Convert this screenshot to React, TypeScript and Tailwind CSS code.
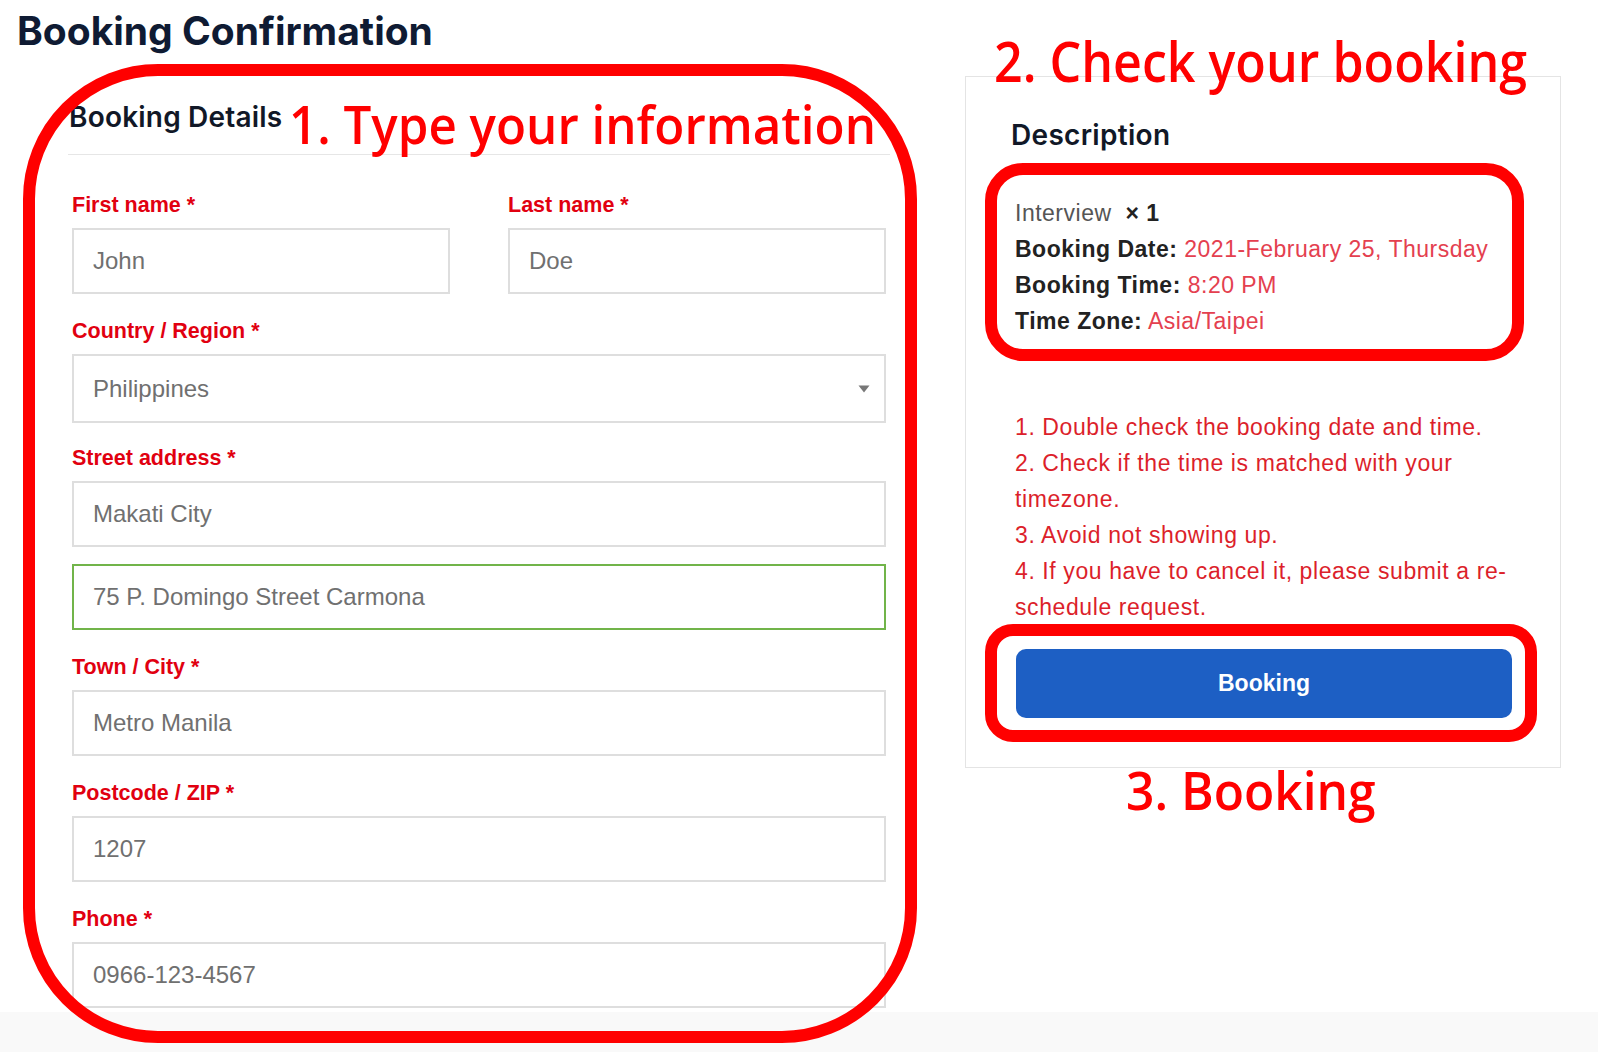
import React from 'react';

const sans = { fontFamily: '"Liberation Sans", Arial, sans-serif' };
const heading = { fontFamily: 'Inter, "Noto Sans", sans-serif' };
const note = { fontFamily: '"Open Sans", "Noto Sans", sans-serif' };

interface FieldProps {
  label: string;
  value: string;
  focused?: boolean;
}

const Label: React.FC<{ text: string }> = ({ text }) => (
  <label className="block text-[21.5px] leading-[24px] font-bold text-[#e10010]" style={sans}>
    {text} *
  </label>
);

const TextInput: React.FC<{ value: string; focused?: boolean }> = ({ value, focused }) => (
  <input
    readOnly
    defaultValue={value}
    className={`block w-full h-[66px] border-2 bg-white pl-[19px] text-[24px] text-[#707070] outline-none ${
      focused ? 'border-[#71b44a]' : 'border-[#dedede]'
    }`}
    style={sans}
  />
);

const Field: React.FC<FieldProps> = ({ label, value, focused }) => (
  <div>
    <Label text={label} />
    <div className="mt-[11px]">
      <TextInput value={value} focused={focused} />
    </div>
  </div>
);

const InfoRow: React.FC<{ name: string; value: string }> = ({ name, value }) => (
  <div>
    <span className="font-bold text-[#222]">{name}</span>{' '}
    <span className="text-[#e4404f]">{value}</span>
  </div>
);

export default function App() {
  return (
    <div className="relative w-[1598px] h-[1052px] overflow-hidden bg-[linear-gradient(to_bottom,#ffffff_1012px,#f9f9f9_1012px)]">
      <h1 className="h-[54px] pl-[17px] pt-2 text-[39px] leading-[1.2] font-bold text-[#0f1b33]" style={heading}>
        Booking Confirmation
      </h1>

      <div className="flex items-start pl-[68px]">
        {/* form */}
        <section className="w-[822px] pt-[47px]">
          <div className="border-b border-[#e6e6e6] pb-[21px]">
            <h2 className="pl-px text-[28px] leading-[32px] font-semibold tracking-[0.2px] text-[#111827]" style={heading}>
              Booking Details
            </h2>
          </div>

          <div className="flex flex-col px-[4px] pt-[38px]">
            <div className="grid grid-cols-2 gap-x-[58px]">
              <Field label="First name" value="John" />
              <Field label="Last name" value="Doe" />
            </div>

            <div className="mt-[25px]">
              <Label text="Country / Region" />
              <div className="relative mt-[11px]">
                <select
                  defaultValue="PH"
                  className="block w-full h-[69px] appearance-none border-2 border-[#dedede] bg-white pl-[19px] text-[24px] text-[#707070] outline-none"
                  style={sans}
                >
                  <option value="PH">Philippines</option>
                </select>
                <svg className="pointer-events-none absolute right-[16px] top-[31px]" width="12" height="8" viewBox="0 0 12 8">
                  <path d="M0.5 0.5h11L6 7.5z" fill="#777" />
                </svg>
              </div>
            </div>

            <div className="mt-[23px]">
              <Label text="Street address" />
              <div className="mt-[11px] flex flex-col gap-[17px]">
                <TextInput value="Makati City" />
                <TextInput value="75 P. Domingo Street Carmona" focused />
              </div>
            </div>

            <div className="mt-[25px]">
              <Field label="Town / City" value="Metro Manila" />
            </div>
            <div className="mt-[25px]">
              <Field label="Postcode / ZIP" value="1207" />
            </div>
            <div className="mt-[25px]">
              <Field label="Phone" value="0966-123-4567" />
            </div>
          </div>
        </section>

        {/* summary */}
        <aside className="ml-[75px] mt-[22px] w-[596px] border border-[#e4e4e4] bg-white pt-[42px] pb-[25px]">
          <h3 className="pl-[45px] text-[28px] leading-[32px] font-semibold tracking-[0.3px] text-[#111827]" style={heading}>
            Description
          </h3>

          <div
            className="mt-[12px] ml-[19px] w-[539px] rounded-[38px] border-[12px] border-[#ff0000] pl-[18px] pt-[20px] pb-[10px] text-[23px] leading-[36px] tracking-[0.5px]"
            style={sans}
          >
            <div>
              <span className="text-[#555]">Interview</span>
              <span className="ml-[14px] font-bold text-[#222]">× 1</span>
            </div>
            <InfoRow name="Booking Date:" value="2021-February 25, Thursday" />
            <InfoRow name="Booking Time:" value="8:20 PM" />
            <InfoRow name="Time Zone:" value="Asia/Taipei" />
          </div>

          <ol
            className="mt-[48px] ml-[49px] w-[515px] text-[23px] leading-[36px] tracking-[0.6px] text-[#dc1f2b]"
            style={sans}
          >
            <li>1. Double check the booking date and time.</li>
            <li>2. Check if the time is matched with your timezone.</li>
            <li>3. Avoid not showing up.</li>
            <li>4. If you have to cancel it, please submit a re-schedule request.</li>
          </ol>

          <div className="-mt-px ml-[19px] w-[552px] rounded-[28px] border-[12px] border-[#ff0000] pt-[13px] pb-[12px] pl-[19px] pr-[13px]">
            <button
              type="button"
              className="block w-full h-[69px] rounded-[10px] bg-[#1d5fc4] text-[23px] font-bold text-white"
              style={sans}
            >
              Booking
            </button>
          </div>
        </aside>
      </div>

      {/* annotations */}
      <div className="pointer-events-none absolute left-[23px] top-[64px] h-[979px] w-[894px] rounded-[135px] border-[12px] border-[#ff0000]" />
      <div
        className="pointer-events-none absolute left-[289px] top-[97px] origin-left scale-x-[0.93] whitespace-nowrap text-[53px] leading-[53px] font-semibold text-[#ff0000]"
        style={note}
      >
        1. Type your information
      </div>
      <div
        className="pointer-events-none absolute left-[994px] top-[32px] origin-left scale-x-[0.895] whitespace-nowrap text-[56px] leading-[56px] font-semibold text-[#ff0000]"
        style={note}
      >
        2. Check your booking
      </div>
      <div
        className="pointer-events-none absolute left-[1126px] top-[764px] origin-left scale-x-[0.955] whitespace-nowrap text-[52px] leading-[52px] font-semibold text-[#ff0000]"
        style={note}
      >
        3. Booking
      </div>
    </div>
  );
}
